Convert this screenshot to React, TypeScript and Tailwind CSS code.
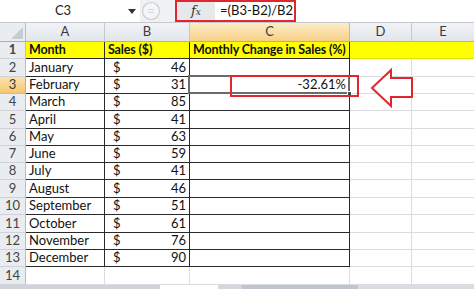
import React from "react";

const months: [string, number][] = [
  ["January", 46],
  ["February", 31],
  ["March", 85],
  ["April", 41],
  ["May", 63],
  ["June", 59],
  ["July", 41],
  ["August", 46],
  ["September", 51],
  ["October", 61],
  ["November", 76],
  ["December", 90],
];

// row heights for rows 1..14
const heights = [17, 18, 17, 17, 18, 17, 17, 17, 18, 17, 18, 17, 17, 18];

const font = { fontFamily: "Lato, 'Open Sans', sans-serif" };

function RowHead({ n, selected }: { n: number; selected?: boolean }) {
  return (
    <div
      className={
        "w-[26px] shrink-0 flex items-center justify-center border-r border-b text-[13px] " +
        (selected
          ? "bg-gradient-to-b from-[#fbe2ae] to-[#f6c671] border-r-[#e9a83a] border-b-[#e8b65e] text-[#3b3b3b]"
          : "bg-[#e9ecf0] border-r-[#b8bdc4] border-b-[#cfd3d8] text-[#444]")
      }
    >
      {n}
    </div>
  );
}

export default function App() {
  return (
    <div className="w-[474px] h-[289px] overflow-hidden bg-white relative text-[#111]" style={font}>
      {/* formula bar */}
      <div className="flex h-[23px] border-b border-[#c6cad0]">
        <div className="w-[140px] shrink-0 flex items-center bg-white">
          <div className="w-[126px] text-center text-[13px] text-[#222]">C3</div>
          <svg width="8" height="5" viewBox="0 0 8 5" className="ml-[2px]">
            <path d="M0 0 L8 0 L4 5 Z" fill="#333" />
          </svg>
        </div>
        <div className="w-[35px] shrink-0 flex items-center bg-[#f0f1f3]">
          <svg width="20" height="20" viewBox="0 0 20 20" className="ml-[1px]">
            <circle cx="10" cy="10" r="8.5" fill="#f4f5f6" stroke="#c9ccd1" strokeWidth="1.2" />
            <path d="M7 8.5 H13 M7 11.5 H13" stroke="#d3d6da" strokeWidth="1" />
          </svg>
        </div>
        <div className="w-[121px] shrink-0 flex border-2 border-[#e2262e]">
          <div className="w-[38px] shrink-0 flex items-center justify-center bg-[#e6e8eb]">
            <span className="italic text-[13px] text-[#333]" style={{ fontFamily: "'DejaVu Serif', serif" }}>
              f<span className="text-[9px]">x</span>
            </span>
          </div>
          <div className="flex-1 flex items-center pl-[5px] text-[13px] text-[#111] bg-white whitespace-nowrap">=(B3-B2)/B2</div>
        </div>
        <div className="flex-1 bg-white" />
      </div>

      {/* column headers */}
      <div className="flex h-[19px] text-[13px] text-[#3b3b3b]">
        <div className="w-[26px] shrink-0 relative bg-[#e9ecf0] border-r border-b border-r-[#b8bdc4] border-b-[#a9afb7]">
          <svg width="12" height="12" viewBox="0 0 12 12" className="absolute right-[2px] bottom-[2px]">
            <path d="M12 0 L12 12 L0 12 Z" fill="#c7ccd2" />
          </svg>
        </div>
        <div className="w-[79px] shrink-0 flex items-center justify-center bg-gradient-to-b from-[#f1f3f6] to-[#e2e6eb] border-r border-b border-r-[#c3c8ce] border-b-[#a9afb7]">A</div>
        <div className="w-[85px] shrink-0 flex items-center justify-center bg-gradient-to-b from-[#f1f3f6] to-[#e2e6eb] border-r border-b border-r-[#c3c8ce] border-b-[#a9afb7]">B</div>
        <div className="w-[160px] shrink-0 flex items-center justify-center bg-gradient-to-b from-[#fdedc8] to-[#f7d086] border-r border-b border-r-[#e5b45c] border-b-[#eea83a]">C</div>
        <div className="w-[62px] shrink-0 flex items-center justify-center bg-gradient-to-b from-[#f1f3f6] to-[#e2e6eb] border-r border-b border-r-[#c3c8ce] border-b-[#a9afb7]">D</div>
        <div className="w-[62px] shrink-0 flex items-center justify-center bg-gradient-to-b from-[#f1f3f6] to-[#e2e6eb] border-b border-b-[#a9afb7]">E</div>
      </div>

      {/* row 1 */}
      <div className="flex h-[17px] text-[12.5px] font-bold tracking-[-0.15px]">
        <RowHead n={1} />
        <div className="w-[79px] shrink-0 flex items-center pl-[3px] bg-[#ffff00] border-r border-b border-[#2a2a2a]">Month</div>
        <div className="w-[85px] shrink-0 flex items-center pl-[3px] bg-[#ffff00] border-r border-b border-[#2a2a2a]">Sales ($)</div>
        <div className="w-[160px] shrink-0 flex items-center pl-[3px] bg-[#ffff00] border-r border-b border-[#2a2a2a] whitespace-nowrap overflow-hidden">Monthly Change in Sales (%)</div>
        <div className="w-[62px] shrink-0 bg-[#ffff00] border-b border-[#e0e000]" />
        <div className="w-[62px] shrink-0 bg-[#ffff00] border-b border-[#e0e000]" />
      </div>

      {/* data rows */}
      {months.map(([m, v], i) => {
        const h = heights[i + 1];
        const row = i + 2;
        return (
          <div key={m} className={"flex text-[13px] " + (h === 18 ? "h-[18px]" : "h-[17px]")}>
            <RowHead n={row} selected={row === 3} />
            <div className="w-[79px] shrink-0 flex items-center pl-[3px] border-r border-b border-[#2a2a2a]">{m}</div>
            <div className="w-[85px] shrink-0 flex items-center justify-between pl-[8px] pr-[3px] border-r border-b border-[#2a2a2a]">
              <span>$</span>
              <span>{v}</span>
            </div>
            <div className="w-[160px] shrink-0 relative flex items-center justify-end pr-[3px] border-r border-b border-[#2a2a2a]">
              {row === 3 && (
                <>
                  <span>-32.61%</span>
                  <div className="absolute -top-[2px] -left-[2px] -right-[1px] -bottom-[1px] border-2 border-[#6b6b6b]" />
                  <div className="absolute -right-[3px] -bottom-[3px] w-[5px] h-[5px] bg-[#4a4a4a] border border-white" />
                </>
              )}
            </div>
            <div className="w-[62px] shrink-0 border-r border-b border-[#dadcdf]" />
            <div className="w-[62px] shrink-0 border-b border-[#dadcdf]" />
          </div>
        );
      })}

      {/* row 14 */}
      <div className="flex h-[18px] text-[13px]">
        <RowHead n={14} />
        <div className="w-[79px] shrink-0 border-r border-b border-[#dadcdf]" />
        <div className="w-[85px] shrink-0 border-r border-b border-[#dadcdf]" />
        <div className="w-[160px] shrink-0 border-r border-b border-[#dadcdf]" />
        <div className="w-[62px] shrink-0 border-r border-b border-[#dadcdf]" />
        <div className="w-[62px] shrink-0 border-b border-[#dadcdf]" />
      </div>

      {/* sheet tabs / scrollbar strip */}
      <div className="flex h-[4px] bg-[#d9dde3]">
        <div className="w-[160px] bg-[#cfd4da]" />
        <div className="w-[58px] bg-white" />
        <div className="w-[24px] bg-[#d3d7dd]" />
        <div className="w-[116px] bg-[#bfc5cc]" />
        <div className="flex-1 bg-[#d9dde3]" />
      </div>

      {/* annotations */}
      <div className="absolute left-[230px] top-[75px] w-[129px] h-[22px] border-2 border-[#e2262e]" />
      <svg className="absolute left-[370px] top-[68px]" width="44" height="40" viewBox="0 0 44 40">
        <path d="M2 20 L21 2 L21 10 L42 10 L42 29 L21 29 L21 38 Z" fill="white" stroke="#e2262e" strokeWidth="2" strokeLinejoin="miter" />
      </svg>
    </div>
  );
}
